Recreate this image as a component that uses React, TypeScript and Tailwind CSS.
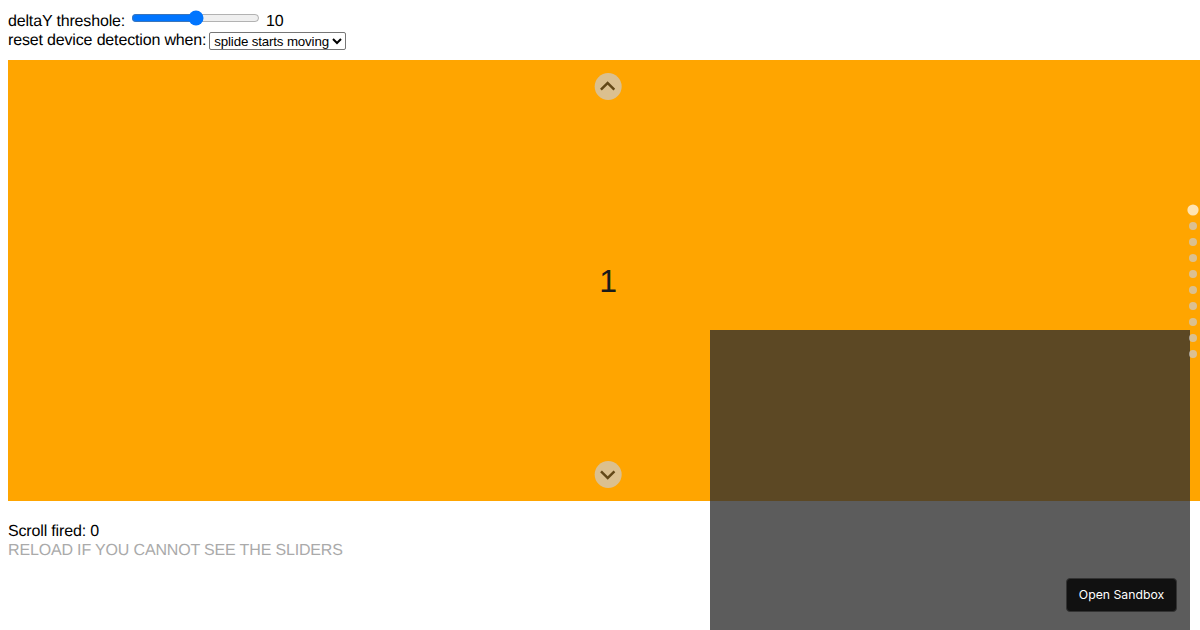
const dots = [0, 1, 2, 3, 4, 5, 6, 7, 8, 9];

const Arrow = ({ up }: { up: boolean }) => (
  <button
    className={`absolute left-1/2 -translate-x-1/2 flex h-[26.67px] w-[26.67px] items-center justify-center rounded-full bg-[#ccc] opacity-70 ${
      up ? "top-[13.33px]" : "bottom-[13.33px]"
    }`}
  >
    <svg
      viewBox="0 0 40 40"
      className={`h-4 w-4 fill-[#222] ${up ? "-rotate-90" : "rotate-90"}`}
    >
      <path d="m15.5 0.932-4.3 4.38 14.5 14.6-14.5 14.5 4.3 4.4 14.6-14.6 4.4-4.3-4.4-4.4-14.6-14.6z" />
    </svg>
  </button>
);

export default function App() {
  return (
    <div className="relative h-[630px] w-[1200px] overflow-hidden bg-white font-['Liberation_Sans',Arial,sans-serif] text-base leading-[19px] tracking-[-0.16px] text-black [text-rendering:geometricPrecision]">
      <div className="px-2 pt-3">
        <div className="flex h-[19px] items-center">
          <span>deltaY threshole:</span>
          <input
            type="range"
            min={0}
            max={20}
            defaultValue={10}
            className="mx-[6px] mb-[7px] h-4 w-[129px] accent-[#0075ff]"
            style={{ appearance: "auto" }}
          />
          <span>10</span>
        </div>
        <div className="flex h-[19px] items-end">
          <span className="self-center">reset device detection when:</span>
          <select
            className="ml-[3px] h-[18px] rounded-[2px] border border-[#767676] bg-white text-[13.33px] leading-none"
            style={{ appearance: "auto" }}
            defaultValue="move"
          >
            <option value="move">splide starts moving</option>
          </select>
        </div>
        <div className="relative mt-[10px] flex h-[441px] w-[1200px] items-center justify-center bg-[#ffa500]">
          <span className="text-[32px] leading-none text-[#1a1a1a]">1</span>
          <Arrow up />
          <Arrow up={false} />
          <ul className="absolute right-[7px] top-[142px] z-10 flex flex-col">
            {dots.map((d) => (
              <li
                key={d}
                className={`m-1 h-2 w-2 rounded-full ${
                  d === 0 ? "scale-[1.4] bg-white opacity-70" : "bg-[#ccc] opacity-70"
                }`}
              />
            ))}
          </ul>
        </div>
        <p className="mt-[21px]">Scroll fired: 0</p>
        <p className="text-[#aaa]">RELOAD IF YOU CANNOT SEE THE SLIDERS</p>
      </div>
      <div className="absolute left-[710px] top-[330px] h-[300px] w-[480px] bg-[rgba(46,46,46,0.78)]">
        <button className="absolute left-[356px] top-[248px] flex h-[34px] w-[111px] items-center justify-center rounded-[4px] border border-[#333] bg-[#111] bg-[radial-gradient(#3a3a3a_0.5px,transparent_0.6px)] bg-[size:6px_6px] pb-px font-['Inter',sans-serif] text-[12.25px] tracking-normal text-white">
          <span className="bg-[#111]">Open Sandbox</span>
        </button>
      </div>
    </div>
  );
}
